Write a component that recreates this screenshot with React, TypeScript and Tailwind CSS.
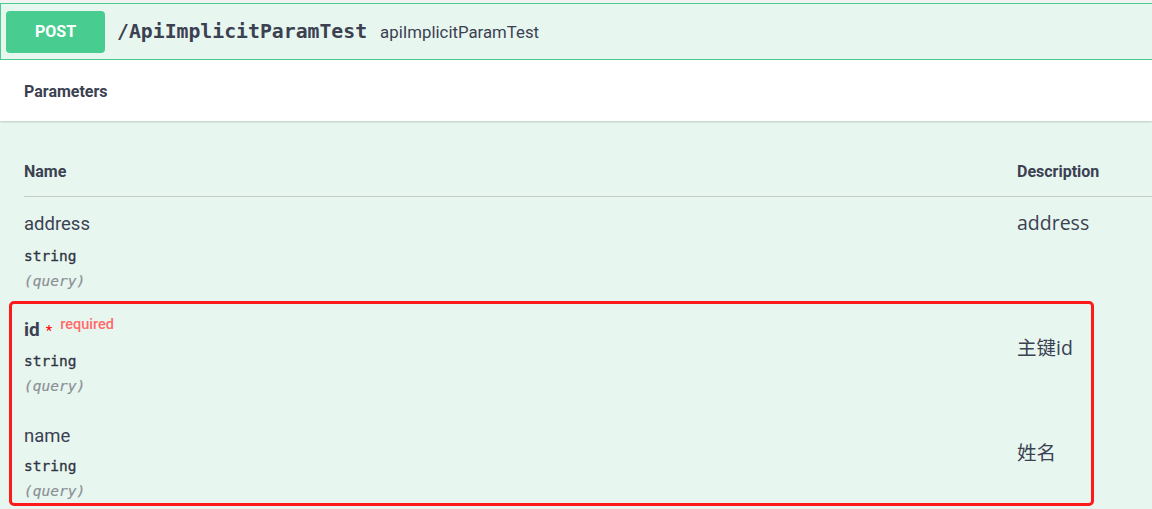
import React from "react";

const sans = { fontFamily: "Roboto, 'Noto Sans CJK SC', sans-serif" };
const desc = { fontFamily: "'Open Sans', 'Noto Sans CJK SC', sans-serif" };
const mono = { fontFamily: "'DejaVu Sans Mono', monospace" };

type Row = {
  name: string;
  required?: boolean;
  description: string;
  pt: number;
  gap: number;
  descPt: number;
};

const rows: Row[] = [
  { name: "address", description: "address", pt: 15, gap: 10, descPt: 14 },
  { name: "id", required: true, description: "主键id", pt: 16, gap: 9, descPt: 34 },
  { name: "name", description: "姓名", pt: 17, gap: 8, descPt: 34 },
];

function ParamRow({ row }: { row: Row }) {
  return (
    <div className="grid grid-cols-[993px_1fr]">
      <div style={{ paddingTop: row.pt }} className="pb-[11px]">
        <div className="h-[24px] flex items-center leading-[24px]" style={sans}>
          {row.required ? (
            <>
              <span className="text-[19px] font-bold text-[#3b4151]">{row.name}</span>
              <span className="text-[#ff0000] text-[15px] ml-[6px] mt-[2px]">*</span>
              <span className="text-[14.5px] font-medium text-[#ff6b6b] ml-[8px] -mt-[10px]">required</span>
            </>
          ) : (
            <span className="text-[18.5px] text-[#3b4151]">{row.name}</span>
          )}
        </div>
        <div
          style={{ marginTop: row.gap, ...mono }}
          className="h-[20px] leading-[20px] text-[14.5px] text-[#2f3441] [-webkit-text-stroke:0.3px_#2f3441]"
        >
          string
        </div>
        <div
          className="mt-[5px] h-[20px] leading-[20px] text-[14.5px] italic text-[#8c9096] [-webkit-text-stroke:0.2px_#8c9096]"
          style={mono}
        >
          (query)
        </div>
      </div>
      <div style={{ paddingTop: row.descPt, ...desc }} className="text-[19.5px] leading-[24px] text-[#3b4151]">
        {row.description}
      </div>
    </div>
  );
}

export default function App() {
  return (
    <div className="relative w-[1152px] h-[509px] overflow-hidden bg-[#e8f6f0]">
      <div className="h-[3px] bg-[#f2f2f2]" />
      <div className="h-[57px] bg-[#e8f6f0] border-y border-l border-[#49cc90] flex items-center pt-[1px]">
        <div
          className="ml-[5px] w-[99px] h-[42px] rounded-[4px] bg-[#49cc90] flex items-center justify-center text-white text-[16px] font-bold"
          style={sans}
        >
          POST
        </div>
        <div
          className="ml-[12px] text-[19.8px] font-bold text-[#3b4151] leading-none"
          style={mono}
        >
          /ApiImplicitParamTest
        </div>
        <div className="ml-[13px] text-[16.8px] text-[#3b4151] leading-none" style={sans}>
          apiImplicitParamTest
        </div>
      </div>
      <div className="relative z-10 h-[61px] bg-white flex items-center pl-[24px] pt-[2px] shadow-[0_1px_2px_rgba(0,0,0,0.18)]">
        <span className="text-[16px] font-bold text-[#3b4151]" style={sans}>
          Parameters
        </span>
      </div>
      <div className="pl-[24px]">
        <div className="grid grid-cols-[993px_1fr] pt-[41px] pb-[14px] border-b border-[#c5cbcf]" style={sans}>
          <div className="h-[20px] leading-[20px] text-[16px] font-bold text-[#3b4151]">Name</div>
          <div className="h-[20px] leading-[20px] text-[16px] font-bold text-[#3b4151]">Description</div>
        </div>
        {rows.map((r) => (
          <ParamRow key={r.name} row={r} />
        ))}
      </div>
      <div className="absolute left-[9px] top-[301px] w-[1085px] h-[205px] border-[3px] border-[#ff1a1a] rounded-[5px] pointer-events-none" />
    </div>
  );
}
